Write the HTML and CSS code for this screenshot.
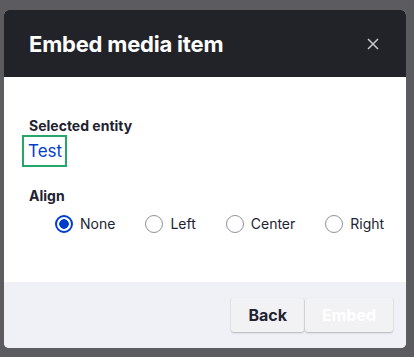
FILE: index.html
```html
<!DOCTYPE html>
<html lang="en">
<head>
  <meta charset="UTF-8" />
  <meta name="viewport" content="width=device-width, initial-scale=1.0" />
  <title>Embed media item</title>
  <link rel="stylesheet" href="styles.css">
</head>
<body>

  <!-- === DIALOG === -->
  <div class="dialog">
    <div class="dialog-header">
      <h1>Embed media item</h1>
      <button class="close-btn" aria-label="Close">
        <svg width="12" height="12" viewBox="0 0 12 12">
          <path d="M1 1 L11 11 M11 1 L1 11" stroke="#c9c9cc" stroke-width="1.5" fill="none" />
        </svg>
      </button>
    </div>

    <div class="dialog-body">
      <div class="field">
        <h2>Selected entity</h2>
        <a href="#" class="entity-link">Test</a>
      </div>

      <div class="field">
        <h2>Align</h2>
        <div class="radios">
          <label class="radio"><span class="dot checked"></span>None</label>
          <label class="radio"><span class="dot"></span>Left</label>
          <label class="radio"><span class="dot"></span>Center</label>
          <label class="radio"><span class="dot"></span>Right</label>
        </div>
      </div>
    </div>

    <div class="dialog-footer">
      <button class="btn">Back</button>
      <button class="btn disabled">Embed</button>
    </div>
  </div>

</body>
</html>
```

FILE: styles.css
```css
* {
  margin: 0;
  padding: 0;
  box-sizing: border-box;
}

body, html {
  height: 100%;
  overflow: hidden;
  font-family: Inter, 'Noto Sans', sans-serif;
}

body {
  background: #5c5c60;
  padding: 10px 0 0 4px;
}

.dialog {
  width: 402px;
  height: 338px;
  border-radius: 5px;
  overflow: hidden;
  display: flex;
  flex-direction: column;
  background: #fff;
}

.dialog-header {
  background: #222328;
  height: 67px;
  display: flex;
  align-items: center;
  justify-content: space-between;
  padding: 0 27px 0 25px;
}

.dialog-header h1 {
  color: #fff;
  font-size: 22px;
  font-weight: 700;
  letter-spacing: -0.2px;
}

.close-btn {
  background: none;
  border: none;
  width: 12px;
  height: 12px;
  display: flex;
}

.dialog-body {
  flex: 1;
  padding: 40px 25px 0;
  color: #222330;
}

.field h2 {
  font-size: 14px;
  font-weight: 700;
  line-height: 18px;
}

.field + .field {
  margin-top: 21px;
}

.entity-link {
  display: inline-block;
  margin-top: 1px;
  margin-left: -6px;
  padding: 3px 4px 3px 5px;
  font-size: 17px;
  line-height: 24px;
  color: #003ecc;
  text-decoration: none;
  outline: 2px solid #26a769;
  outline-offset: -1px;
}

.radios {
  display: flex;
  gap: 30px;
  padding: 9px 0 0 26px;
}

.radio {
  display: flex;
  align-items: center;
  gap: 7px;
  font-size: 14px;
  line-height: 20px;
}

.dot {
  width: 18px;
  height: 18px;
  border-radius: 50%;
  border: 1px solid #8e929c;
  background: #fff;
}

.dot.checked {
  border: 2px solid #003ecc;
  background: radial-gradient(circle, #003ecc 0 4.5px, #fff 5px);
}

.dialog-footer {
  background: #f0f1f6;
  height: 66px;
  display: flex;
  justify-content: flex-end;
  align-items: flex-start;
  gap: 1px;
  padding: 16px 13px 0 0;
}

.btn {
  height: 34px;
  padding: 0 17px;
  font-family: inherit;
  font-size: 16px;
  font-weight: 700;
  color: #222330;
  background: #f2f2f5;
  border: none;
  border-radius: 3px;
  box-shadow: 0 1px 2px rgba(0, 0, 0, 0.25);
}

.btn.disabled {
  color: #fff;
  width: 88px;
}
```
